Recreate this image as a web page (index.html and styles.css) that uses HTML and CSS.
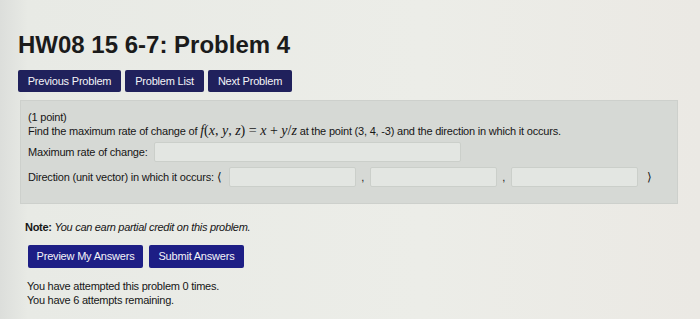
FILE: index.html
```html
<!DOCTYPE html>
<html>
<head>
<meta charset="utf-8">
<link rel="stylesheet" href="styles.css">
</head>
<body>
<div class="page">
  <h1 class="title">HW08 15 6-7: Problem 4</h1>
  <div class="nav">
    <span class="btn nav-btn prev">Previous Problem</span>
    <span class="btn nav-btn list">Problem List</span>
    <span class="btn nav-btn next">Next Problem</span>
  </div>
  <div class="problem">
    <div class="line">(1 point)</div>
    <div class="line">Find the maximum rate of change of <span class="math"><i>f</i>(<i>x</i>, <i>y</i>, <i>z</i>) = <i>x</i> + <i>y</i>/<i>z</i></span> at the point (3, 4, -3) and the direction in which it occurs.</div>
    <div class="row first">Maximum rate of change: <span class="input wide"></span></div>
    <div class="row">Direction (unit vector) in which it occurs: <span class="ang">&#x27E8;</span><span class="input vec"></span><span class="comma">,</span><span class="input vec"></span><span class="comma">,</span><span class="input vec"></span><span class="ang close">&#x27E9;</span></div>
  </div>
  <p class="note"><b>Note:</b> <i>You can earn partial credit on this problem.</i></p>
  <div class="actions">
    <span class="btn act-btn preview">Preview My Answers</span>
    <span class="btn act-btn submit">Submit Answers</span>
  </div>
  <div class="attempts">
    <div>You have attempted this problem 0 times.</div>
    <div>You have 6 attempts remaining.</div>
  </div>
</div>
</body>
</html>
```
FILE: styles.css
```css
html, body {
  margin: 0;
  padding: 0;
}
body {
  background: linear-gradient(90deg, #dcdedb 0%, #e8eae5 4%, #ecede8 60%, #ebe9e4 100%);
  font-family: "Liberation Sans", Arial, sans-serif;
  color: #161616;
  width: 700px;
  height: 319px;
  overflow: hidden;
}
.page {
  padding: 31px 0 0 18px;
}
.title {
  margin: 0;
  font-size: 24px;
  font-weight: bold;
  line-height: 28px;
  color: #1b1b1b;
}
.nav {
  display: flex;
  gap: 4px;
  margin-top: 11px;
}
.btn {
  display: inline-block;
  color: #f4f4f8;
  font-size: 11px;
  line-height: 22px;
  height: 22px;
  border-radius: 2px;
  text-align: center;
  letter-spacing: -0.2px;
}
.nav-btn {
  background: #20215c;
}
.prev { width: 103px; }
.list { width: 79px; }
.next { width: 84px; }
.problem {
  margin-top: 8px;
  margin-left: 2px;
  width: 643px;
  background: #d6d9d5;
  border: 1px solid #cdd0cc;
  padding: 10px 6px 16px 7px;
  font-size: 11px;
  color: #161616;
  letter-spacing: -0.2px;
}
.line {
  line-height: 13px;
}
.math {
  font-family: "Liberation Serif", "Times New Roman", serif;
  font-size: 14px;
  letter-spacing: 0;
}
.row {
  display: flex;
  align-items: center;
  margin-top: 5px;
  height: 20px;
}
.row.first {
  margin-top: 4px;
}
.input {
  display: inline-block;
  box-sizing: border-box;
  height: 20px;
  background: #e3e6e2;
  border: 1px solid #cbcfca;
  border-radius: 2px;
}
.wide {
  width: 307px;
  margin-left: 6px;
}
.vec {
  width: 127px;
}
.ang {
  margin: 0 7px 0 3px;
  font-size: 12px;
}
.ang.close {
  margin-left: 9px;
}
.comma {
  width: 14px;
  text-align: center;
}
.note {
  margin: 17px 0 0 7px;
  font-size: 11px;
  line-height: 13px;
  letter-spacing: -0.3px;
}
.actions {
  display: flex;
  gap: 6px;
  margin: 11px 0 0 10px;
}
.act-btn {
  background: #1d1e85;
  height: 23px;
  line-height: 23px;
}
.preview { width: 115px; }
.submit { width: 95px; }
.attempts {
  margin: 11px 0 0 9px;
  font-size: 11px;
  line-height: 14px;
  letter-spacing: -0.25px;
}
```
